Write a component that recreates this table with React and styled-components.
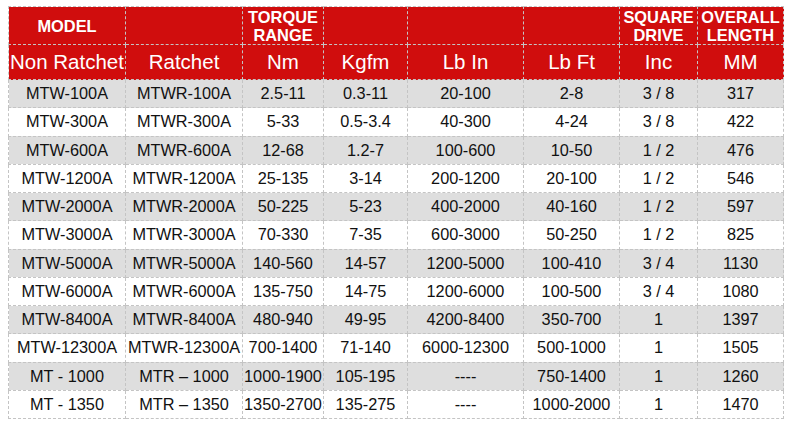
import React from "react";
import styled, { createGlobalStyle } from "styled-components";

const GlobalStyle = createGlobalStyle`
  body {
    margin: 0;
    background: #ffffff;
    font-family: "Liberation Sans", Arial, sans-serif;
  }
`;

const Page = styled.div`
  padding: 6px 0 0 8px;
`;

const Table = styled.table`
  border-collapse: collapse;
  table-layout: fixed;
  width: 775px;
  border: 1px dashed #b8b8b8;
`;

const HeadCell = styled.th`
  background: #d00d0d;
  color: #ffffff;
  border: 1px dashed #c4c4c4;
  padding: 0;
  text-align: center;
  vertical-align: middle;
  font-weight: ${(p) => (p.$unit ? "normal" : "bold")};
  font-size: ${(p) => (p.$unit ? "20.5px" : "16.4px")};
  line-height: ${(p) => (p.$unit ? "24px" : "18px")};
  height: ${(p) => (p.$unit ? "34px" : "37px")};
  white-space: nowrap;
`;

const Row = styled.tr`
  background: ${(p) => (p.$shaded ? "#dedede" : "#ffffff")};
`;

const Cell = styled.td`
  border: 1px dashed #c4c4c4;
  padding: 0;
  height: 27.25px;
  text-align: center;
  vertical-align: middle;
  font-size: 16.3px;
  color: #111111;
  white-space: nowrap;
`;

const widths = [117, 117, 81, 84, 116, 96, 78, 86];

const topHeads = ["MODEL", "", "TORQUE\nRANGE", "", "", "", "SQUARE\nDRIVE", "OVERALL\nLENGTH"];
const unitHeads = ["Non Ratchet", "Ratchet", "Nm", "Kgfm", "Lb In", "Lb Ft", "Inc", "MM"];

const rows = [
  ["MTW-100A", "MTWR-100A", "2.5-11", "0.3-11", "20-100", "2-8", "3 / 8", "317"],
  ["MTW-300A", "MTWR-300A", "5-33", "0.5-3.4", "40-300", "4-24", "3 / 8", "422"],
  ["MTW-600A", "MTWR-600A", "12-68", "1.2-7", "100-600", "10-50", "1 / 2", "476"],
  ["MTW-1200A", "MTWR-1200A", "25-135", "3-14", "200-1200", "20-100", "1 / 2", "546"],
  ["MTW-2000A", "MTWR-2000A", "50-225", "5-23", "400-2000", "40-160", "1 / 2", "597"],
  ["MTW-3000A", "MTWR-3000A", "70-330", "7-35", "600-3000", "50-250", "1 / 2", "825"],
  ["MTW-5000A", "MTWR-5000A", "140-560", "14-57", "1200-5000", "100-410", "3 / 4", "1130"],
  ["MTW-6000A", "MTWR-6000A", "135-750", "14-75", "1200-6000", "100-500", "3 / 4", "1080"],
  ["MTW-8400A", "MTWR-8400A", "480-940", "49-95", "4200-8400", "350-700", "1", "1397"],
  ["MTW-12300A", "MTWR-12300A", "700-1400", "71-140", "6000-12300", "500-1000", "1", "1505"],
  ["MT - 1000", "MTR \u2013 1000", "1000-1900", "105-195", "----", "750-1400", "1", "1260"],
  ["MT - 1350", "MTR \u2013 1350", "1350-2700", "135-275", "----", "1000-2000", "1", "1470"],
];

const App = () => {
  return (
    <Page>
      <GlobalStyle />
      <Table>
        <colgroup>
          {widths.map((w, i) => (
            <col key={i} style={{ width: w }} />
          ))}
        </colgroup>
        <thead>
          <tr>
            {topHeads.map((h, i) => (
              <HeadCell key={i}>
                {h.split("\n").map((line, j) => (
                  <div key={j}>{line}</div>
                ))}
              </HeadCell>
            ))}
          </tr>
          <tr>
            {unitHeads.map((h, i) => (
              <HeadCell key={i} $unit>
                {h}
              </HeadCell>
            ))}
          </tr>
        </thead>
        <tbody>
          {rows.map((r, i) => (
            <Row key={i} $shaded={i % 2 === 0}>
              {r.map((c, j) => (
                <Cell key={j}>{c}</Cell>
              ))}
            </Row>
          ))}
        </tbody>
      </Table>
    </Page>
  );
};

export default App;
